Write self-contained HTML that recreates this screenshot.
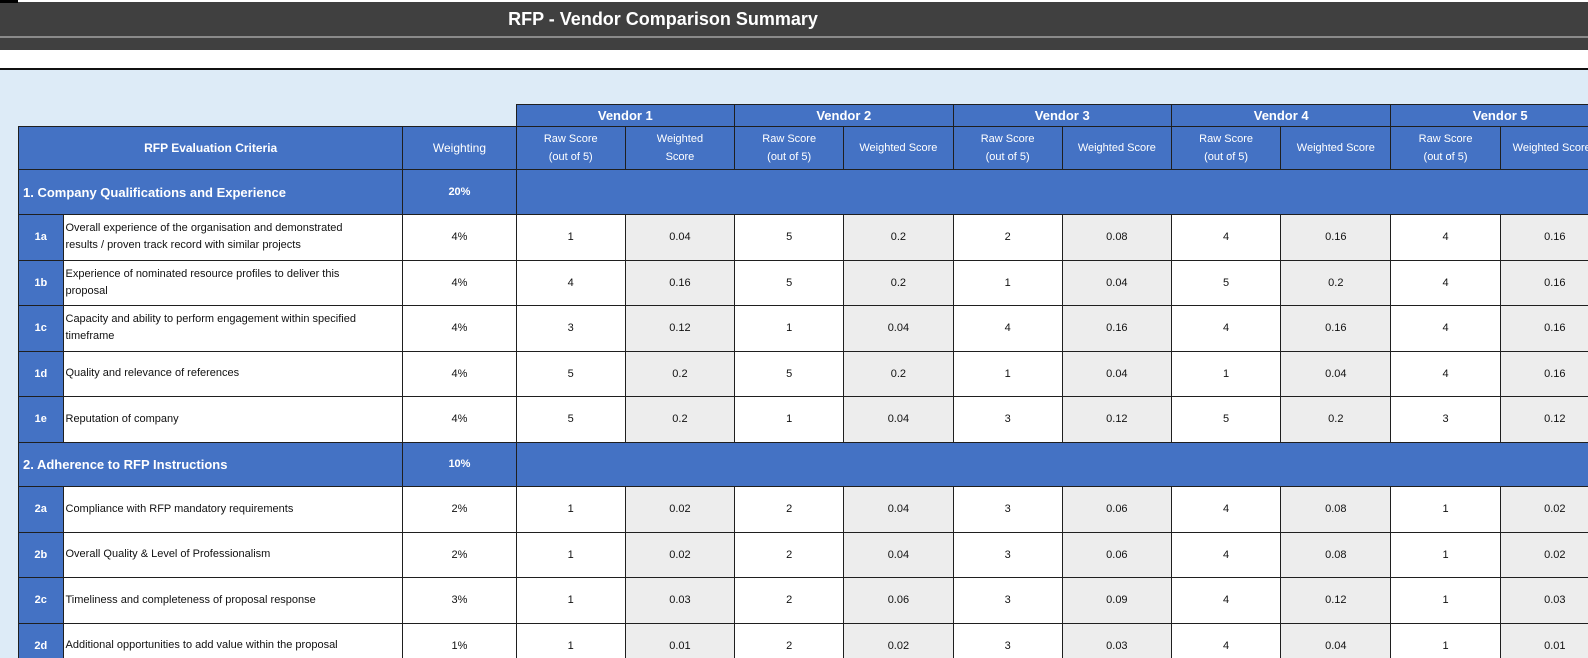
<!DOCTYPE html>
<html><head><meta charset="utf-8"><style>
*{margin:0;padding:0;box-sizing:border-box}
html,body{width:1588px;height:658px;overflow:hidden;background:#fff;font-family:"Liberation Sans",Arial,sans-serif;position:relative}
.top{position:absolute;left:0;top:2px;width:1588px;height:48px;background:#404040}
.top .ln{position:absolute;left:0;top:34px;width:100%;height:2px;background:#8a8a8a}
.top .t{position:absolute;left:0;width:1326px;top:7px;text-align:center;color:#fff;font-weight:bold;font-size:18px}
.blk{position:absolute;left:0;top:0;width:18px;height:3px;background:#000}
.bar{position:absolute;left:0;top:68px;width:1588px;height:2px;background:#111}
.bg{position:absolute;left:0;top:70px;width:1588px;height:588px;background:#ddebf7}
.wrap{position:absolute;left:0;top:0;width:2000px;height:658px}
table{position:absolute;left:18px;top:104px;border-collapse:collapse;table-layout:fixed;width:1592px}
td{border:1px solid #1f1f1f;font-size:11px;text-align:center;color:#111;background:#fff;overflow:hidden;white-space:normal}
.b{background:#4472c4;color:#fff;font-weight:bold}
.g{background:#ededed}
.l{text-align:left;padding-left:2px;padding-right:30px;font-size:11px;line-height:17px}
.n{border:none;background:transparent}
tr.v td.b{font-size:13px}
.s{font-size:13px;text-align:left;padding-left:4px}
.h{font-weight:normal;line-height:18px}
tr.d{height:45.5px}
</style></head><body>
<div class="top"><div class="ln"></div><div class="t">RFP - Vendor Comparison Summary</div></div>
<div class="blk"></div>
<div class="bar"></div>
<div class="bg"></div>
<div class="wrap">
<table>
<colgroup><col style="width:44px"><col style="width:336px"><col style="width:112px">
<col style="width:108px"><col style="width:108px"><col style="width:108px"><col style="width:108px"><col style="width:108px"><col style="width:108px"><col style="width:108px"><col style="width:109px"><col style="width:108px"><col style="width:108px"></colgroup>
<tr class="v" style="height:22px"><td class="n" colspan="3"></td><td class="b" colspan="2">Vendor 1</td><td class="b" colspan="2">Vendor 2</td><td class="b" colspan="2">Vendor 3</td><td class="b" colspan="2">Vendor 4</td><td class="b" colspan="2">Vendor 5</td></tr>
<tr style="height:43px"><td class="b" colspan="2" style="font-size:12px">RFP Evaluation Criteria</td><td class="b h" style="font-size:12px">Weighting</td>
<td class="b h">Raw Score<br>(out of 5)</td><td class="b h">Weighted<br>Score</td>
<td class="b h">Raw Score<br>(out of 5)</td><td class="b h">Weighted Score</td>
<td class="b h">Raw Score<br>(out of 5)</td><td class="b h">Weighted Score</td>
<td class="b h">Raw Score<br>(out of 5)</td><td class="b h">Weighted Score</td>
<td class="b h">Raw Score<br>(out of 5)</td><td class="b h" style="text-align:left;padding-left:12px;white-space:nowrap">Weighted Score</td></tr>
<tr style="height:45px"><td class="b s" colspan="2">1. Company Qualifications and Experience</td><td class="b">20%</td><td class="b" colspan="10"></td></tr>
<tr class="d"><td class="b">1a</td><td class="l">Overall experience of the organisation and demonstrated results / proven track record with similar projects</td><td>4%</td><td>1</td><td class="g">0.04</td><td>5</td><td class="g">0.2</td><td>2</td><td class="g">0.08</td><td>4</td><td class="g">0.16</td><td>4</td><td class="g">0.16</td></tr>
<tr class="d"><td class="b">1b</td><td class="l">Experience of nominated resource profiles to deliver this proposal</td><td>4%</td><td>4</td><td class="g">0.16</td><td>5</td><td class="g">0.2</td><td>1</td><td class="g">0.04</td><td>5</td><td class="g">0.2</td><td>4</td><td class="g">0.16</td></tr>
<tr class="d"><td class="b">1c</td><td class="l">Capacity and ability to perform engagement within specified timeframe</td><td>4%</td><td>3</td><td class="g">0.12</td><td>1</td><td class="g">0.04</td><td>4</td><td class="g">0.16</td><td>4</td><td class="g">0.16</td><td>4</td><td class="g">0.16</td></tr>
<tr class="d"><td class="b">1d</td><td class="l">Quality and relevance of references</td><td>4%</td><td>5</td><td class="g">0.2</td><td>5</td><td class="g">0.2</td><td>1</td><td class="g">0.04</td><td>1</td><td class="g">0.04</td><td>4</td><td class="g">0.16</td></tr>
<tr class="d"><td class="b">1e</td><td class="l">Reputation of company</td><td>4%</td><td>5</td><td class="g">0.2</td><td>1</td><td class="g">0.04</td><td>3</td><td class="g">0.12</td><td>5</td><td class="g">0.2</td><td>3</td><td class="g">0.12</td></tr>
<tr style="height:44.5px"><td class="b s" colspan="2">2. Adherence to RFP Instructions</td><td class="b">10%</td><td class="b" colspan="10"></td></tr>
<tr class="d"><td class="b">2a</td><td class="l">Compliance with RFP mandatory requirements</td><td>2%</td><td>1</td><td class="g">0.02</td><td>2</td><td class="g">0.04</td><td>3</td><td class="g">0.06</td><td>4</td><td class="g">0.08</td><td>1</td><td class="g">0.02</td></tr>
<tr class="d"><td class="b">2b</td><td class="l">Overall Quality &amp; Level of Professionalism</td><td>2%</td><td>1</td><td class="g">0.02</td><td>2</td><td class="g">0.04</td><td>3</td><td class="g">0.06</td><td>4</td><td class="g">0.08</td><td>1</td><td class="g">0.02</td></tr>
<tr class="d"><td class="b">2c</td><td class="l">Timeliness and completeness of proposal response</td><td>3%</td><td>1</td><td class="g">0.03</td><td>2</td><td class="g">0.06</td><td>3</td><td class="g">0.09</td><td>4</td><td class="g">0.12</td><td>1</td><td class="g">0.03</td></tr>
<tr class="d"><td class="b">2d</td><td class="l">Additional opportunities to add value within the proposal</td><td>1%</td><td>1</td><td class="g">0.01</td><td>2</td><td class="g">0.02</td><td>3</td><td class="g">0.03</td><td>4</td><td class="g">0.04</td><td>1</td><td class="g">0.01</td></tr>
</table>
</div>
</body></html>
